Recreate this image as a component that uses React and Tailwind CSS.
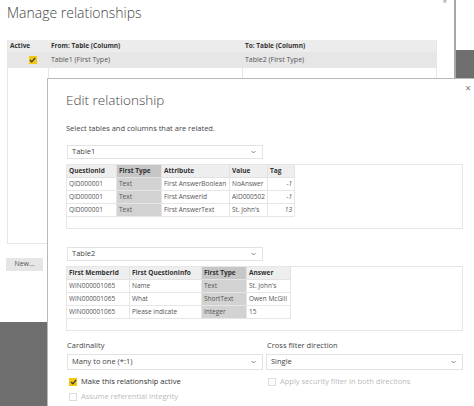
import React from 'react';

const font = { fontFamily: '"Open Sans", "Noto Sans", sans-serif' };

const Chevron = () => (
    <svg width="5" height="4" viewBox="0 0 5 4" className="shrink-0">
        <path d="M0.5 1 L2.5 3 L4.5 1" fill="none" stroke="#777" strokeWidth="0.9" />
    </svg>
);

const YellowCheck = () => (
    <span className="flex h-[8px] w-[8px] items-center justify-center bg-[#f2c811]">
        <svg width="7" height="6" viewBox="0 0 7 6">
            <path d="M1 3 L2.8 4.8 L6 1" fill="none" stroke="#3a3a3a" strokeWidth="1.3" />
        </svg>
    </span>
);

const Dropdown = ({ label, className = '' }) => (
    <div className={`flex h-[14px] items-center justify-between border border-[#e3e3e3] bg-white pl-[4px] pr-[6px] text-[7.5px] text-[#444] ${className}`}>
        <span>{label}</span>
        <Chevron />
    </div>
);

const table1 = {
    cols: [
        { name: 'QuestionId', w: 'w-[50px]' },
        { name: 'First Type', w: 'w-[45px]', hi: true },
        { name: 'Attribute', w: 'w-[68px]' },
        { name: 'Value', w: 'w-[38px]' },
        { name: 'Tag', w: 'w-[27px]', right: true },
    ],
    rows: [
        ['QID000001', 'Text', 'First AnswerBoolean', 'NoAnswer', '-1'],
        ['QID000001', 'Text', 'First AnswerId', 'AID000502', '-1'],
        ['QID000001', 'Text', 'First AnswerText', "St. John's", '13'],
    ],
};

const table2 = {
    cols: [
        { name: 'First MemberId', w: 'w-[63px]' },
        { name: 'First QuestionInfo', w: 'w-[72px]' },
        { name: 'First Type', w: 'w-[45px]', hi: true },
        { name: 'Answer', w: 'w-[44px]' },
    ],
    rows: [
        ['WIN000001065', 'Name', 'Text', "St. John's"],
        ['WIN000001065', 'What', 'ShortText', 'Owen McGill'],
        ['WIN000001065', 'Please indicate', 'Integer', '15'],
    ],
};

const Preview = ({ data }) => (
    <div className="h-[65px] w-[397px] border border-[#e6e6e6] bg-white">
        <div className="flex">
            {data.cols.map((c) => (
                <div
                    key={c.name}
                    className={`${c.w} flex h-[13px] shrink-0 items-center whitespace-nowrap border-r border-b border-[#e2e2e2] px-[2px] text-[6.5px] font-bold text-[#333] ${c.hi ? 'bg-[#c6c6c6]' : 'bg-[#eeeeee]'}`}
                >
                    {c.name}
                </div>
            ))}
        </div>
        {data.rows.map((row, i) => (
            <div key={i} className="flex">
                {row.map((cell, j) => {
                    const c = data.cols[j];
                    return (
                        <div
                            key={j}
                            className={`${c.w} flex h-[13px] shrink-0 items-center overflow-hidden whitespace-nowrap border-r border-b border-[#e6e6e6] px-[2px] text-[6.5px] text-[#555] ${c.hi ? 'bg-[#d2d2d2] border-[#c4c4c4]' : 'bg-white'} ${c.right ? 'justify-end italic' : ''}`}
                        >
                            {cell}
                        </div>
                    );
                })}
            </div>
        ))}
    </div>
);

const EmptyBox = () => <span className="h-[8px] w-[8px] border border-[#dcdcdc] bg-white" />;

export default function App() {
    return (
        <div className="relative h-[406px] w-[474px] overflow-hidden bg-[#6e6e6e]" style={font}>
            {/* Manage relationships (behind) */}
            <div className="flex">
                <div className="relative h-[322px] w-[456px] border-r-2 border-[#a9a9a9] bg-white px-[7px]">
                    <div className="absolute right-[7px] top-[-3px] text-[8px] leading-[8px] text-[#888]">×</div>
                    <div className="pt-[3px] text-[14px] font-light leading-[20px] text-[#444]">Manage relationships</div>
                    <div className="mt-[17px] h-[204px] w-[430px] border-x border-b border-[#e6e6e6]">
                        <div className="flex h-[12px] bg-[#ececec] text-[6.5px] font-bold text-[#333]">
                            <div className="flex w-[41px] items-center pl-[2px]">Active</div>
                            <div className="flex w-[194px] items-center pl-[2px]">From: Table (Column)</div>
                            <div className="flex items-center pl-[2px]">To: Table (Column)</div>
                        </div>
                        <div className="flex h-[16px] bg-[#e6e6e6] text-[7px] text-[#555]">
                            <div className="flex w-[41px] items-center justify-center pl-[8px]">
                                <YellowCheck />
                            </div>
                            <div className="flex w-[194px] items-center pl-[2px]">Table1 (First Type)</div>
                            <div className="flex items-center pl-[2px]">Table2 (First Type)</div>
                        </div>
                        <div className="flex h-[20px]">
                            <div className="w-[41px] border-r border-[#e6e6e6]" />
                            <div className="w-[194px] border-r border-[#e6e6e6]" />
                        </div>
                    </div>
                    <button className="mt-[14px] ml-[-1px] flex h-[13px] w-[37px] items-center justify-center bg-[#e6e6e6] text-[7px] text-[#555]">
                        New...
                    </button>
                </div>
                <div className="h-[50px] flex-1 bg-white" />
            </div>

            {/* Edit relationship (front) */}
            <div className="absolute left-[47px] top-[78px] h-[340px] w-[440px] border border-[#b9b9b9] bg-white pl-[18px]">
                <div className="absolute right-[15px] top-[2px] text-[10px] text-[#777]">×</div>
                <div className="pt-[12px] text-[13.5px] font-light leading-[19px] text-[#444]">Edit relationship</div>
                <div className="mt-[13px] text-[7.5px] leading-[10px] text-[#444]">Select tables and columns that are related.</div>
                <Dropdown label="Table1" className="mt-[12px] ml-[1px] w-[196px]" />
                <div className="mt-[5px]">
                    <Preview data={table1} />
                </div>
                <Dropdown label="Table2" className="mt-[18px] ml-[1px] w-[196px]" />
                <div className="mt-[5px]">
                    <Preview data={table2} />
                </div>
                <div className="mt-[9px] flex gap-[3px] pl-[1px]">
                    <div className="flex w-[196px] flex-col">
                        <div className="text-[7.5px] leading-[10px] text-[#444]">Cardinality</div>
                        <Dropdown label="Many to one (*:1)" className="mt-[4px] h-[16px] w-[196px]" />
                        <label className="mt-[6px] flex items-center gap-[4px] pl-[2px] text-[7.5px] text-[#333]">
                            <YellowCheck />
                            Make this relationship active
                        </label>
                        <label className="mt-[4px] flex items-center gap-[4px] pl-[2px] text-[7.5px] text-[#bbb]">
                            <EmptyBox />
                            Assume referential integrity
                        </label>
                    </div>
                    <div className="flex w-[197px] flex-col">
                        <div className="pl-[1px] text-[7.5px] leading-[10px] text-[#444]">Cross filter direction</div>
                        <Dropdown label="Single" className="mt-[4px] h-[16px] w-[197px]" />
                        <label className="mt-[6px] flex items-center gap-[4px] pl-[2px] text-[7.5px] text-[#bbb]">
                            <EmptyBox />
                            Apply security filter in both directions
                        </label>
                    </div>
                </div>
            </div>
        </div>
    );
}
